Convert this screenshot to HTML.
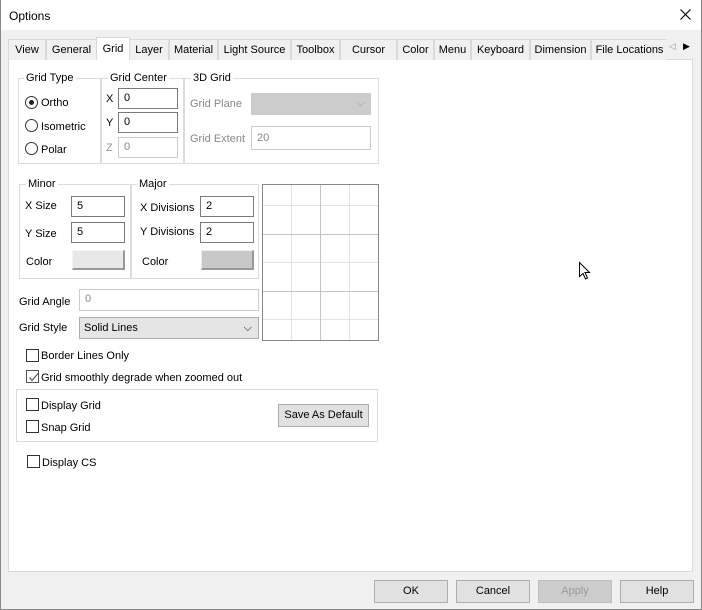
<!DOCTYPE html>
<html><head><style>
*{box-sizing:border-box;margin:0;padding:0}
body{width:702px;height:610px;background:#f0f0f0;font-family:"Liberation Sans",sans-serif;font-size:11px;color:#000;position:relative;overflow:hidden}
.a{position:absolute}
.tab{position:absolute;top:39px;height:21px;border:1px solid #d9d9d9;border-bottom:none;background:#f0f0f0;text-align:center;line-height:21px;font-size:11px}
.grp{position:absolute;border:1px solid #dcdcdc}
.lg{position:absolute;background:#fff;padding:0 2px;font-size:11px;line-height:12px}
.inp{position:absolute;height:21px;border:1px solid #7a7a7a;background:#fff;padding-left:5px;line-height:19px}
.dis{border-color:#ccc;color:#888}
.rad{position:absolute;width:13px;height:13px;border:1px solid #333;border-radius:50%;background:#fff}
.cb{position:absolute;width:13px;height:13px;border:1px solid #333;background:#fff}
.btn{position:absolute;height:23px;border:1px solid #adadad;background:#e1e1e1;text-align:center;line-height:21px;font-size:11px}
</style></head><body>
<div class="a" style="left:0;top:0;width:702px;height:30px;background:#fff"></div>
<div class="a" style="left:9px;top:9px;font-size:12px">Options</div>
<svg class="a" style="left:680px;top:9px" width="11" height="11"><path d="M0.5 0.5L10.5 10.5M10.5 0.5L0.5 10.5" stroke="#000" stroke-width="1.1"/></svg>
<div class="a" style="left:0;top:0;width:1px;height:610px;background:#888"></div>
<div class="a" style="right:0;top:0;width:1px;height:610px;background:#888"></div>
<div class="a" style="left:0;bottom:0;width:702px;height:1px;background:#888"></div>

<div class="a" style="left:8px;top:59px;width:685px;height:513px;background:#fff;border:1px solid #d9d9d9"></div>
<div class="tab" style="left:8px;width:38px">View</div>
<div class="tab" style="left:46px;width:51px">General</div>
<div class="tab" style="left:129px;width:40px">Layer</div>
<div class="tab" style="left:169px;width:49px">Material</div>
<div class="tab" style="left:218px;width:73px">Light Source</div>
<div class="tab" style="left:291px;width:49px">Toolbox</div>
<div class="tab" style="left:340px;width:57px">Cursor</div>
<div class="tab" style="left:397px;width:37px">Color</div>
<div class="tab" style="left:434px;width:37px">Menu</div>
<div class="tab" style="left:471px;width:59px">Keyboard</div>
<div class="tab" style="left:530px;width:61px">Dimension</div>
<div class="tab" style="left:591px;width:76px;border-right:none">File Locations</div>
<div class="tab" style="left:96px;top:37px;width:34px;height:23px;background:#fff;line-height:23px">Grid</div>
<div class="a" style="left:669px;top:41px;color:#999;font-size:9px">◁</div>
<div class="a" style="left:683px;top:41px;font-size:9px">▶</div>

<div class="grp" style="left:18px;top:78px;width:83px;height:86px"></div>
<div class="lg" style="left:24px;top:72px">Grid Type</div>
<div class="rad" style="left:25px;top:96px"><div class="a" style="left:3px;top:3px;width:5px;height:5px;border-radius:50%;background:#222"></div></div>
<div class="a" style="left:41px;top:97px">Ortho</div>
<div class="rad" style="left:25px;top:119px"></div><div class="a" style="left:41px;top:121px">Isometric</div>
<div class="rad" style="left:25px;top:142px"></div><div class="a" style="left:41px;top:144px">Polar</div>

<div class="grp" style="left:101px;top:78px;width:83px;height:86px"></div>
<div class="lg" style="left:108px;top:72px">Grid Center</div>
<div class="a" style="left:106px;top:93px">X</div><div class="inp" style="left:118px;top:88px;width:60px">0</div>
<div class="a" style="left:106px;top:117px">Y</div><div class="inp" style="left:118px;top:112px;width:60px">0</div>
<div class="a" style="left:106px;top:142px;color:#999">Z</div><div class="inp dis" style="left:118px;top:137px;width:60px">0</div>

<div class="grp" style="left:184px;top:78px;width:195px;height:86px"></div>
<div class="lg" style="left:191px;top:72px">3D Grid</div>
<div class="a" style="left:190px;top:98px;color:#888">Grid Plane</div>
<div class="a" style="left:251px;top:93px;width:120px;height:22px;background:#ccc;border:1px solid #ccc"><span class="a" style="right:5px;top:3px;color:#999">⌵</span></div>
<div class="a" style="left:190px;top:133px;color:#888">Grid Extent</div>
<div class="inp dis" style="left:251px;top:126px;width:120px;height:24px;line-height:22px">20</div>

<div class="grp" style="left:19px;top:184px;width:112px;height:95px"></div>
<div class="lg" style="left:26px;top:178px">Minor</div>
<div class="a" style="left:25px;top:200px">X Size</div><div class="inp" style="left:71px;top:196px;width:54px">5</div>
<div class="a" style="left:25px;top:228px">Y Size</div><div class="inp" style="left:71px;top:222px;width:54px">5</div>
<div class="a" style="left:26px;top:256px">Color</div>
<div class="a" style="left:72px;top:250px;width:53px;height:20px;background:#e8e8e8;border:1px solid #f5f5f5;border-right:2px solid #999;border-bottom:2px solid #999"></div>
<div class="grp" style="left:131px;top:184px;width:128px;height:95px"></div>
<div class="lg" style="left:137px;top:178px">Major</div>
<div class="a" style="left:140px;top:202px">X Divisions</div><div class="inp" style="left:200px;top:196px;width:54px">2</div>
<div class="a" style="left:140px;top:226px">Y Divisions</div><div class="inp" style="left:200px;top:222px;width:54px">2</div>
<div class="a" style="left:142px;top:256px">Color</div>
<div class="a" style="left:201px;top:250px;width:53px;height:20px;background:#c8c8c8;border:1px solid #eee;border-right:2px solid #999;border-bottom:2px solid #999"></div>

<svg class="a" style="left:262px;top:184px" width="117" height="157">
<rect x="0.5" y="0.5" width="116" height="156" fill="#fff" stroke="#888"/>
<g stroke="#e4e4e4"><line x1="29.5" y1="1" x2="29.5" y2="156"/><line x1="87.5" y1="1" x2="87.5" y2="156"/>
<line x1="1" y1="21.5" x2="116" y2="21.5"/><line x1="1" y1="78.5" x2="116" y2="78.5"/><line x1="1" y1="135.5" x2="116" y2="135.5"/></g>
<g stroke="#c4c4c4"><line x1="58.5" y1="1" x2="58.5" y2="156"/><line x1="1" y1="50.5" x2="116" y2="50.5"/><line x1="1" y1="107.5" x2="116" y2="107.5"/></g>
</svg>

<div class="a" style="left:19px;top:296px">Grid Angle</div>
<div class="inp dis" style="left:79px;top:289px;width:180px;height:22px">0</div>
<div class="a" style="left:19px;top:322px">Grid Style</div>
<div class="a" style="left:79px;top:317px;width:180px;height:22px;background:#e5e5e5;border:1px solid #adadad;padding-left:4px;line-height:21px">Solid Lines<span class="a" style="right:6px;top:0">⌵</span></div>

<div class="cb" style="left:26px;top:349px"></div><div class="a" style="left:41px;top:350px">Border Lines Only</div>
<div class="cb" style="left:26px;top:370px;border-color:#555"><svg class="a" style="left:1px;top:1px" width="11" height="11"><path d="M1.5 5.5L4 8.5L10 1.5" stroke="#555" stroke-width="1.2" fill="none"/></svg></div><div class="a" style="left:41px;top:372px">Grid smoothly degrade when zoomed out</div>

<div class="grp" style="left:16px;top:389px;width:362px;height:53px"></div>
<div class="cb" style="left:26px;top:398px"></div><div class="a" style="left:41px;top:400px">Display Grid</div>
<div class="cb" style="left:26px;top:420px"></div><div class="a" style="left:41px;top:422px">Snap Grid</div>
<div class="btn" style="left:278px;top:404px;width:91px">Save As Default</div>

<div class="cb" style="left:27px;top:455px"></div><div class="a" style="left:42px;top:457px">Display CS</div>

<svg class="a" style="left:578px;top:261px" width="14" height="20"><path d="M1.5 1.5L1.5 15.5L5 12.5L7.5 18L9.5 17L7 11.5L11.5 11.5Z" fill="#fff" stroke="#000" stroke-width="1"/></svg>

<div class="btn" style="left:374px;top:580px;width:74px">OK</div>
<div class="btn" style="left:456px;top:580px;width:74px">Cancel</div>
<div class="btn" style="left:538px;top:580px;width:74px;background:#ccc;border-color:#bfbfbf;color:#999">Apply</div>
<div class="btn" style="left:620px;top:580px;width:74px">Help</div>
</body></html>
